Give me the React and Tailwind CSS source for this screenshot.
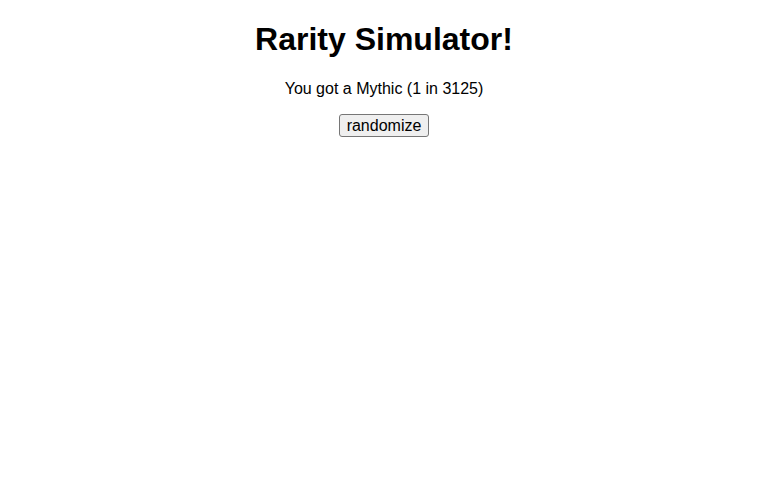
import React, { useState } from "react";

const rarities = [
  { name: "Common", chance: 2 },
  { name: "Uncommon", chance: 5 },
  { name: "Rare", chance: 25 },
  { name: "Epic", chance: 125 },
  { name: "Legendary", chance: 625 },
  { name: "Mythic", chance: 3125 },
];

const App = () => {
  const [result, setResult] = useState(rarities[5]);

  const randomize = () => {
    // walk down the list, each tier is 5x rarer than the previous one
    let picked = rarities[0];
    for (const r of rarities) {
      if (Math.random() < 1 / r.chance) picked = r;
    }
    setResult(picked);
  };

  return (
    <div className="min-h-screen bg-white text-black text-center font-['Liberation_Sans',Arial,sans-serif]">
      <h1 className="pt-[21.44px] mb-[21.44px] text-[32px] font-bold leading-[normal]">
        Rarity Simulator!
      </h1>
      <p className="text-base leading-[normal] mb-4">
        You got a {result.name} (1 in {result.chance})
      </p>
      <button
        onClick={randomize}
        className="px-[7px] py-[1px] text-base leading-[19px] bg-[#efefef] border border-[#767676] rounded-[3px] text-black"
      >
        randomize
      </button>
    </div>
  );
};

export default App;
